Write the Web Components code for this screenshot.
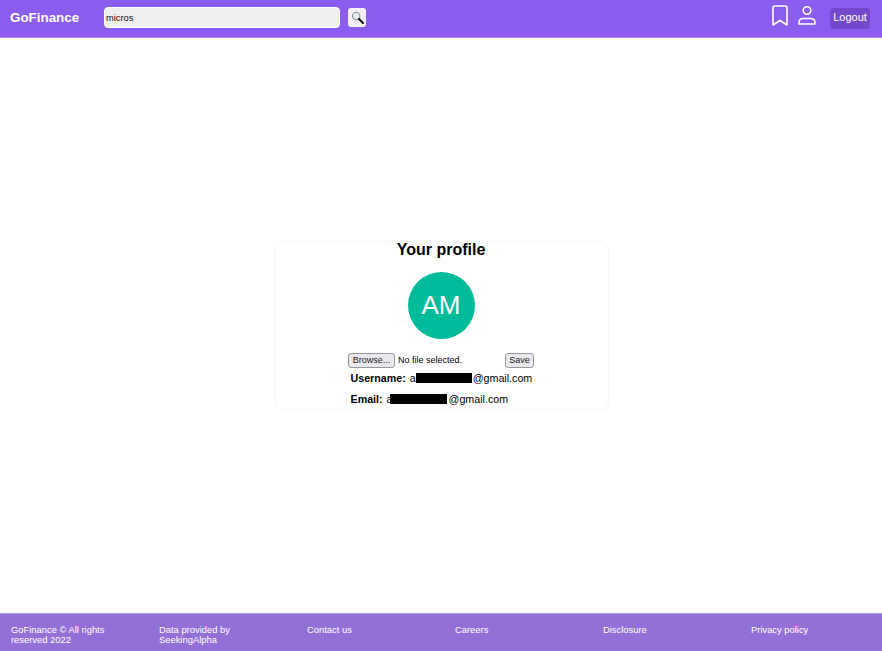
<!DOCTYPE html>
<html lang="en">
<head>
<meta charset="utf-8">
<title>GoFinance</title>
<style>
html, body { margin: 0; height: 100%; }
body {
    display: flex;
    flex-direction: column;
    height: 651px;
    overflow: hidden;
    background: #fff;
    font-family: "Liberation Sans", Arial, sans-serif;
}
</style>
</head>
<body>
<gf-header>
    <gf-search value="micros"></gf-search>
</gf-header>
<gf-main>
    <gf-profile-card>
        <gf-field label="Username:"><span>a</span><gf-redacted width="56" overlap="0" after="1"></gf-redacted><span>@gmail.com</span></gf-field>
        <gf-field label="Email:"><span>a</span><gf-redacted width="57" overlap="3" after="2"></gf-redacted><span>@gmail.com</span></gf-field>
    </gf-profile-card>
</gf-main>
<gf-footer>
    <span>GoFinance © All rights reserved 2022</span>
    <span>Data provided by SeekingAlpha</span>
    <span>Contact us</span>
    <span>Careers</span>
    <span>Disclosure</span>
    <span>Privacy policy</span>
</gf-footer>
<script>
const headerTemplate = document.createElement('template');
headerTemplate.innerHTML = `
    <style>
    :host {
        display: flex;
        align-items: center;
        flex: none;
        height: 37px;
        padding: 0 12px 0 10px;
        background: #8b5cf0;
        border-bottom: 1px solid #a583f0;
        color: #fff;
    }
    .logo {
        width: 94px;
        margin-bottom: 2px;
        font-size: 13.4px;
        font-weight: bold;
    }
    ::slotted(gf-search) { margin-bottom: 2px; }
    .right {
        display: flex;
        align-items: center;
        margin-left: auto;
    }
    .bookmark { margin: 0 10px 7px 0; }
    .user { margin: 0 14px 7px 0; }
    svg { display: block; fill: none; stroke: #fff; stroke-width: 1.6; stroke-linejoin: round; stroke-linecap: round; }
    button {
        width: 40px;
        height: 21px;
        padding: 0 0 4px;
        border: 0;
        border-radius: 4px;
        background: #7548cb;
        color: #fff;
        font: 11px "Liberation Sans", Arial, sans-serif;
    }
    </style>
    <div class="logo">GoFinance</div>
    <slot></slot>
    <div class="right">
        <svg class="bookmark" width="16" height="21" viewBox="0 0 16 21"><path d="M1 3Q1 1 3 1H13Q15 1 15 3V20L8 15.5L1 20Z"/></svg>
        <svg class="user" width="18" height="20" viewBox="0 0 18 20"><circle cx="9" cy="5.5" r="3.8"/><path d="M1 19V17.5Q1 13.5 5.5 13.5H12.5Q17 13.5 17 17.5V19Z"/></svg>
        <button>Logout</button>
    </div>
`;

class GfHeader extends HTMLElement {
    constructor() {
        super();
        const root = this.attachShadow({mode: 'open'});
        root.appendChild(headerTemplate.content.cloneNode(true));
    }
}

const searchTemplate = document.createElement('template');
searchTemplate.innerHTML = `
    <style>
    :host {
        display: flex;
        align-items: center;
        gap: 8px;
    }
    input {
        box-sizing: border-box;
        width: 236px;
        height: 21px;
        padding: 0 1px;
        border: 1px solid #fff;
        border-radius: 4px;
        background: #efefef;
        color: #111;
        font: 9.3px "Liberation Sans", Arial, sans-serif;
        outline: none;
    }
    button {
        display: flex;
        align-items: center;
        justify-content: center;
        box-sizing: border-box;
        width: 18px;
        height: 19px;
        padding: 0;
        border: 0;
        border-radius: 3px;
        background: #f4f2f8;
    }
    svg { display: block; }
    </style>
    <input type="text">
    <button aria-label="Search">
        <svg width="13" height="13" viewBox="0 0 13 13">
            <circle cx="5.2" cy="5" r="3.7" fill="#e6ecef" stroke="#8a8a8a" stroke-width="1.1"/>
            <path d="M8 8L12 12" stroke="#111" stroke-width="2" stroke-linecap="round"/>
        </svg>
    </button>
`;

class GfSearch extends HTMLElement {
    constructor() {
        super();
        const root = this.attachShadow({mode: 'open'});
        root.appendChild(searchTemplate.content.cloneNode(true));
    }
    connectedCallback() {
        this.shadowRoot.querySelector('input').setAttribute('value', this.getAttribute('value') || '');
    }
}

const mainTemplate = document.createElement('template');
mainTemplate.innerHTML = `
    <style>
    :host {
        display: flex;
        flex: 1;
        align-items: center;
        justify-content: center;
        min-height: 0;
    }
    </style>
    <slot></slot>
`;

class GfMain extends HTMLElement {
    constructor() {
        super();
        const root = this.attachShadow({mode: 'open'});
        root.appendChild(mainTemplate.content.cloneNode(true));
    }
}

const cardTemplate = document.createElement('template');
cardTemplate.innerHTML = `
    <style>
    :host {
        display: flex;
        flex-direction: column;
        align-items: center;
        box-sizing: border-box;
        width: 335px;
        height: 169px;
        border: 1px solid #f6f6f6;
        border-radius: 8px;
        color: #000;
    }
    h2 {
        margin: 0;
        font-size: 16px;
        line-height: 15px;
    }
    .avatar {
        display: flex;
        align-items: center;
        justify-content: center;
        width: 67px;
        height: 67px;
        margin-top: 15px;
        border-radius: 50%;
        background: #00bc9b;
        color: #fff;
        font-size: 26px;
    }
    .upload {
        display: flex;
        align-items: center;
        box-sizing: border-box;
        width: 186px;
        height: 16px;
        margin-top: 13px;
        font-size: 9px;
    }
    .upload button {
        box-sizing: border-box;
        height: 15px;
        padding: 0;
        border: 1px solid #999;
        border-radius: 3px;
        background: #e9e9ed;
        color: #222;
        font: 9px "Liberation Sans", Arial, sans-serif;
    }
    .browse { width: 47px; margin-right: 3px; }
    .save { width: 29px; margin-left: auto; }
    .fields {
        display: flex;
        flex-direction: column;
        gap: 6px;
        align-self: flex-start;
        margin: 2px 0 0 76px;
    }
    </style>
    <h2>Your profile</h2>
    <div class="avatar">AM</div>
    <div class="upload">
        <button class="browse">Browse...</button>
        <span>No file selected.</span>
        <button class="save">Save</button>
    </div>
    <div class="fields"><slot></slot></div>
`;

class GfProfileCard extends HTMLElement {
    constructor() {
        super();
        const root = this.attachShadow({mode: 'open'});
        root.appendChild(cardTemplate.content.cloneNode(true));
    }
}

const fieldTemplate = document.createElement('template');
fieldTemplate.innerHTML = `
    <style>
    :host {
        display: flex;
        align-items: center;
        height: 15px;
        font-size: 10.7px;
        white-space: nowrap;
    }
    b { margin-right: 4px; }
    </style>
    <b></b><slot></slot>
`;

class GfField extends HTMLElement {
    constructor() {
        super();
        const root = this.attachShadow({mode: 'open'});
        root.appendChild(fieldTemplate.content.cloneNode(true));
    }
    connectedCallback() {
        this.shadowRoot.querySelector('b').textContent = this.getAttribute('label');
    }
}

// black bar over the private part of an address, it covers the end of the letter before it
class GfRedacted extends HTMLElement {
    constructor() {
        super();
        const root = this.attachShadow({mode: 'open'});
        root.innerHTML = `
            <style>
            :host {
                display: inline-block;
                height: 10px;
                background: #000;
            }
            </style>
        `;
    }
    connectedCallback() {
        this.style.width = this.getAttribute('width') + 'px';
        this.style.marginLeft = -this.getAttribute('overlap') + 'px';
        this.style.marginRight = this.getAttribute('after') + 'px';
    }
}

const footerTemplate = document.createElement('template');
footerTemplate.innerHTML = `
    <style>
    :host {
        display: grid;
        grid-template-columns: repeat(6, 1fr);
        column-gap: 28px;
        flex: none;
        box-sizing: border-box;
        height: 38px;
        padding: 11px 11px 0;
        background: #9370d8;
        border-top: 1px solid #b39be4;
        color: #fff;
        font-size: 9.4px;
        line-height: 10px;
    }
    </style>
    <slot></slot>
`;

class GfFooter extends HTMLElement {
    constructor() {
        super();
        const root = this.attachShadow({mode: 'open'});
        root.appendChild(footerTemplate.content.cloneNode(true));
    }
}

customElements.define('gf-header', GfHeader);
customElements.define('gf-search', GfSearch);
customElements.define('gf-main', GfMain);
customElements.define('gf-profile-card', GfProfileCard);
customElements.define('gf-field', GfField);
customElements.define('gf-redacted', GfRedacted);
customElements.define('gf-footer', GfFooter);
</script>
</body>
</html>
